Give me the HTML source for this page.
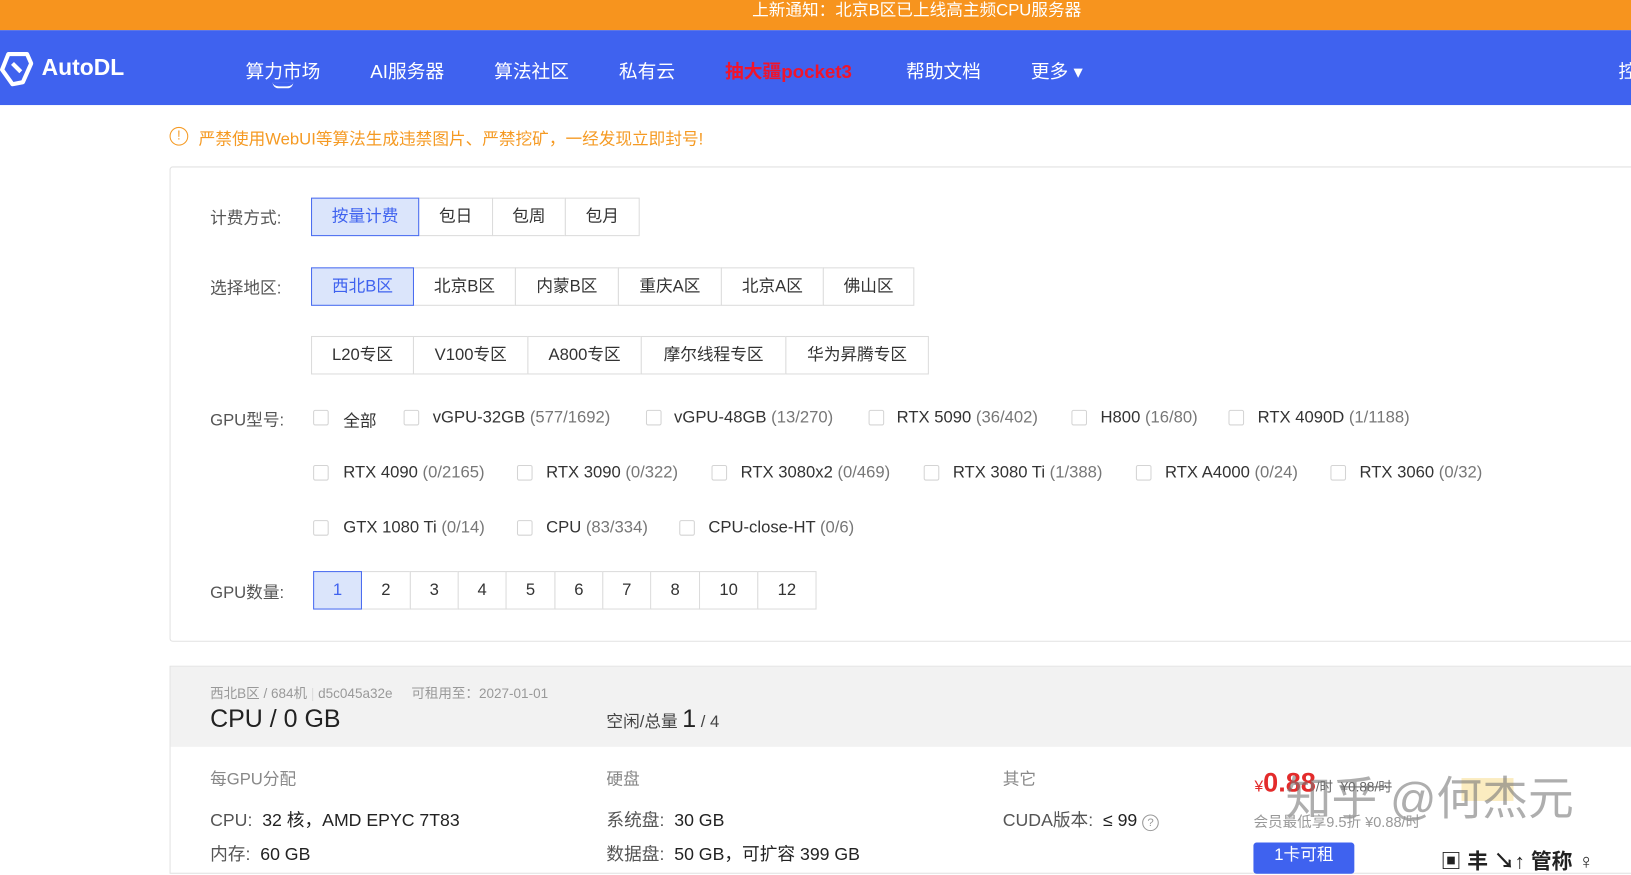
<!DOCTYPE html>
<html><head><meta charset="utf-8"><style>
*{margin:0;padding:0;box-sizing:border-box}
html,body{width:1631px;height:859px;overflow:hidden;background:#fff}
#w{position:absolute;left:0;top:0;width:1568px;height:826px;transform:scale(1.0402);transform-origin:0 0;font-family:"Liberation Sans","Noto Sans CJK SC",sans-serif;color:#333}
.a{position:absolute;white-space:nowrap}
.top{position:absolute;left:0;top:0;width:1568px;height:29px;background:#f7941e}
.nav{position:absolute;left:0;top:29px;width:1568px;height:72px;background:#3f62ef}
.nav .a{color:#fff;font-size:18px;top:26px}
.btn{position:absolute;height:37px;border:1px solid #dcdcdc;font-size:16px;color:#333;text-align:center;line-height:35px;background:#fff}
.sel{background:#dbe5fb;border-color:#4a6cf0;color:#3f62ef;z-index:2}
.lbl{position:absolute;left:202px;font-size:16px;color:#555}
.cb{position:absolute;width:15px;height:15px;border:1px solid #d4d4d4;border-radius:2px;background:#fff}
.gt{position:absolute;font-size:16px;color:#333;white-space:nowrap}
.gt span{color:#777}
</style></head><body><div id="w">
<div class="top"><div class="a" style="left:723px;top:1px;line-height:20px;color:#fff;font-size:16px">上新通知：北京B区已上线高主频CPU服务器</div></div>
<div class="nav">
<svg class="a" style="left:0;top:20px" width="32" height="34" viewBox="0 0 32 34"><path d="M8 3 L26 3 L30 12 L22 30 L12 32 L2 18 Z" fill="none" stroke="#fff" stroke-width="4" stroke-linejoin="round"/><path d="M12 12 L20 20" stroke="#fff" stroke-width="4"/></svg>
<div class="a" style="left:40px;top:23px;color:#fff;font-size:22px;font-weight:bold">AutoDL</div>
<div class="a" style="left:236px">算力市场</div>
<div class="a" style="left:262px;top:50px;width:20px;height:6px;border-bottom:2px solid #fff;border-radius:0 0 10px 10px"></div>
<div class="a" style="left:356px">AI服务器</div>
<div class="a" style="left:475px">算法社区</div>
<div class="a" style="left:595px">私有云</div>
<div class="a" style="left:697px;color:#f0142c;font-weight:bold">抽大疆pocket3</div>
<div class="a" style="left:871px">帮助文档</div>
<div class="a" style="left:991px">更多 ▾</div>
<div class="a" style="left:1556px">控</div>
</div>
<div class="a" style="left:163px;top:122px;width:18px;height:18px;border:1.5px solid #f59a23;border-radius:50%;color:#f59a23;font-size:12px;text-align:center;line-height:15px">!</div>
<div class="a" style="left:191px;top:120px;font-size:16px;color:#f59a23">严禁使用WebUI等算法生成违禁图片、严禁挖矿，一经发现立即封号!</div>
<div class="a" style="left:163px;top:160px;width:1420px;height:457px;border:1px solid #e2e2e2;border-radius:3px"></div>
<div class="lbl" style="top:196px">计费方式:</div>
<div class="btn sel" style="left:299px;top:190px;width:104px">按量计费</div>
<div class="btn" style="left:402px;top:190px;width:72px">包日</div>
<div class="btn" style="left:473px;top:190px;width:71px">包周</div>
<div class="btn" style="left:543px;top:190px;width:72px">包月</div>
<div class="lbl" style="top:263px">选择地区:</div>
<div class="btn sel" style="left:299px;top:257px;width:99px">西北B区</div>
<div class="btn" style="left:397px;top:257px;width:99px">北京B区</div>
<div class="btn" style="left:495px;top:257px;width:100px">内蒙B区</div>
<div class="btn" style="left:594px;top:257px;width:100px">重庆A区</div>
<div class="btn" style="left:693px;top:257px;width:99px">北京A区</div>
<div class="btn" style="left:791px;top:257px;width:88px">佛山区</div>
<div class="btn" style="left:299px;top:323px;width:99px">L20专区</div>
<div class="btn" style="left:397px;top:323px;width:111px">V100专区</div>
<div class="btn" style="left:507px;top:323px;width:110px">A800专区</div>
<div class="btn" style="left:616px;top:323px;width:140px">摩尔线程专区</div>
<div class="btn" style="left:755px;top:323px;width:138px">华为昇腾专区</div>
<div class="lbl" style="top:390px">GPU型号:</div>
<div class="cb" style="left:301px;top:394px"></div><div class="gt" style="left:330px;top:391px">全部</div>
<div class="cb" style="left:388px;top:394px"></div><div class="gt" style="left:416px;top:393px">vGPU-32GB <span>(577/1692)</span></div>
<div class="cb" style="left:621px;top:394px"></div><div class="gt" style="left:648px;top:393px">vGPU-48GB <span>(13/270)</span></div>
<div class="cb" style="left:835px;top:394px"></div><div class="gt" style="left:862px;top:393px">RTX 5090 <span>(36/402)</span></div>
<div class="cb" style="left:1030px;top:394px"></div><div class="gt" style="left:1058px;top:393px">H800 <span>(16/80)</span></div>
<div class="cb" style="left:1181px;top:394px"></div><div class="gt" style="left:1209px;top:393px">RTX 4090D <span>(1/1188)</span></div>
<div class="cb" style="left:301px;top:447px"></div><div class="gt" style="left:330px;top:446px">RTX 4090 <span>(0/2165)</span></div>
<div class="cb" style="left:497px;top:447px"></div><div class="gt" style="left:525px;top:446px">RTX 3090 <span>(0/322)</span></div>
<div class="cb" style="left:684px;top:447px"></div><div class="gt" style="left:712px;top:446px">RTX 3080x2 <span>(0/469)</span></div>
<div class="cb" style="left:888px;top:447px"></div><div class="gt" style="left:916px;top:446px">RTX 3080 Ti <span>(1/388)</span></div>
<div class="cb" style="left:1092px;top:447px"></div><div class="gt" style="left:1120px;top:446px">RTX A4000 <span>(0/24)</span></div>
<div class="cb" style="left:1279px;top:447px"></div><div class="gt" style="left:1307px;top:446px">RTX 3060 <span>(0/32)</span></div>
<div class="cb" style="left:301px;top:500px"></div><div class="gt" style="left:330px;top:499px">GTX 1080 Ti <span>(0/14)</span></div>
<div class="cb" style="left:497px;top:500px"></div><div class="gt" style="left:525px;top:499px">CPU <span>(83/334)</span></div>
<div class="cb" style="left:653px;top:500px"></div><div class="gt" style="left:681px;top:499px">CPU-close-HT <span>(0/6)</span></div>
<div class="lbl" style="top:556px">GPU数量:</div>
<div class="btn sel" style="left:301px;top:549px;width:47px">1</div>
<div class="btn" style="left:347px;top:549px;width:48px">2</div>
<div class="btn" style="left:394px;top:549px;width:47px">3</div>
<div class="btn" style="left:440px;top:549px;width:47px">4</div>
<div class="btn" style="left:486px;top:549px;width:48px">5</div>
<div class="btn" style="left:533px;top:549px;width:47px">6</div>
<div class="btn" style="left:579px;top:549px;width:47px">7</div>
<div class="btn" style="left:625px;top:549px;width:48px">8</div>
<div class="btn" style="left:672px;top:549px;width:57px">10</div>
<div class="btn" style="left:728px;top:549px;width:57px">12</div>
<div class="a" style="left:163px;top:640px;width:1420px;height:200px;border:1px solid #e2e2e2"></div>
<div class="a" style="left:164px;top:641px;width:1420px;height:77px;background:#f2f2f2"></div>
<div class="a" style="left:202px;top:656px;font-size:13px;color:#999">西北B区 / 684机 <span style="color:#ddd">|</span> d5c045a32e &nbsp;&nbsp;&nbsp;&nbsp;可租用至：2027-01-01</div>
<div class="a" style="left:202px;top:678px;font-size:24px;color:#222">CPU / 0 GB</div>
<div class="a" style="left:583px;top:678px;font-size:16px;color:#444">空闲/总量 <span style="font-size:24px;color:#222">1</span> / 4</div>
<div class="a" style="left:202px;top:735px;font-size:16px;color:#888">每GPU分配</div>
<div class="a" style="left:583px;top:735px;font-size:16px;color:#888">硬盘</div>
<div class="a" style="left:964px;top:735px;font-size:16px;color:#888">其它</div>
<div class="a" style="left:202px;top:774px;font-size:17px;color:#555">CPU: &nbsp;<b style="color:#222;font-weight:normal">32 核，AMD EPYC 7T83</b></div>
<div class="a" style="left:583px;top:774px;font-size:17px;color:#555">系统盘: &nbsp;<span style="color:#222">30 GB</span></div>
<div class="a" style="left:964px;top:774px;font-size:17px;color:#555">CUDA版本: &nbsp;<span style="color:#222">≤ 99</span> <span style="display:inline-block;width:16px;height:16px;border:1px solid #999;border-radius:50%;font-size:11px;text-align:center;line-height:14px;color:#999">?</span></div>
<div class="a" style="left:202px;top:807px;font-size:17px;color:#555">内存: &nbsp;<span style="color:#222">60 GB</span></div>
<div class="a" style="left:583px;top:807px;font-size:17px;color:#555">数据盘: &nbsp;<span style="color:#222">50 GB，可扩容 399 GB</span></div>
<div class="a" style="left:1206px;top:737px;font-size:15px;color:#e32b2b">¥<b style="font-size:26px">0.88</b><span style="font-size:13px;color:#666">/时 &nbsp;<s>¥0.88/时</s></span></div>
<div class="a" style="left:1405px;top:748px;width:50px;height:22px;background:#fbecc0"></div>
<div class="a" style="left:1236px;top:732px;font-size:44px;color:rgba(120,120,120,.6)">知乎 @何杰元</div>
<div class="a" style="left:1205px;top:780px;font-size:14px;color:#999">会员最低享9.5折 ¥0.88/时</div>
<div class="a" style="left:1205px;top:810px;width:97px;height:30px;background:#3f62ef;border-radius:3px;color:#fff;font-size:16px;text-align:center;line-height:26px">1卡可租</div>
<div class="a" style="left:1385px;top:812px;font-size:20px;color:#222;font-weight:bold">▣ 丰 ↘↑ 管称 ♀</div>
</div></body></html>
